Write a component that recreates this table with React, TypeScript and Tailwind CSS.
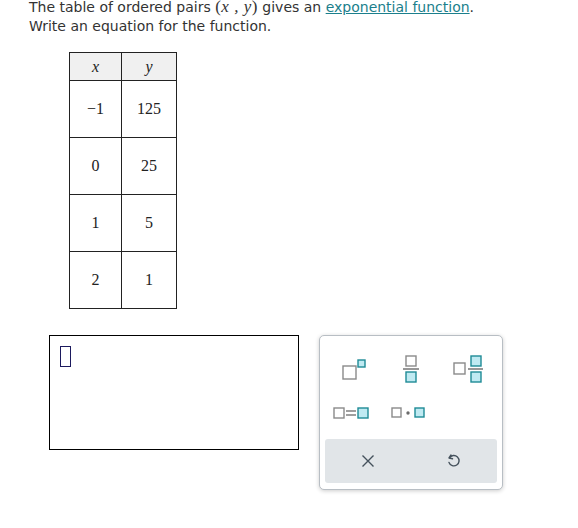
import React from "react"

const sans = { fontFamily: '"DejaVu Sans", Verdana, sans-serif' }
const serif = { fontFamily: '"Liberation Serif", "Times New Roman", serif' }

const rows = [
  ["\u22121", "125"],
  ["0", "25"],
  ["1", "5"],
  ["2", "1"],
]

function Empty({ x, y, s }: { x: number; y: number; s: number }) {
  return <rect x={x} y={y} width={s} height={s} fill="white" stroke="#8a8a8a" strokeWidth="1.4" />
}

function Filled({ x, y, s }: { x: number; y: number; s: number }) {
  return <rect x={x} y={y} width={s} height={s} fill="#bfeaf2" stroke="#1f8b96" strokeWidth="1.4" />
}

function KeyPower() {
  return (
    <svg width="30" height="26" viewBox="0 0 30 26">
      <Empty x={4} y={10} s={13} />
      <Filled x={19} y={4} s={7} />
    </svg>
  )
}

function KeyFraction() {
  return (
    <svg width="20" height="32" viewBox="0 0 20 32">
      <Empty x={5} y={3} s={10} />
      <line x1="2" y1="16" x2="18" y2="16" stroke="#6b6b6b" strokeWidth="1.4" />
      <Filled x={5} y={19} s={10} />
    </svg>
  )
}

function KeyMixed() {
  return (
    <svg width="34" height="32" viewBox="0 0 34 32">
      <Empty x={3} y={10} s={11} />
      <Filled x={20} y={3} s={10} />
      <line x1="17" y1="16" x2="32" y2="16" stroke="#6b6b6b" strokeWidth="1.4" />
      <Filled x={20} y={19} s={10} />
    </svg>
  )
}

function KeyEquals() {
  return (
    <svg width="40" height="16" viewBox="0 0 40 16">
      <Empty x={2} y={3} s={10} />
      <line x1="14" y1="6" x2="24" y2="6" stroke="#6b6b6b" strokeWidth="1.3" />
      <line x1="14" y1="10" x2="24" y2="10" stroke="#6b6b6b" strokeWidth="1.3" />
      <Filled x={26} y={3} s={10} />
    </svg>
  )
}

function KeyDot() {
  return (
    <svg width="36" height="16" viewBox="0 0 36 16">
      <Empty x={2} y={3} s={9} />
      <circle cx="18" cy="8" r="1.7" fill="#6b6b6b" />
      <Filled x={25} y={3} s={9} />
    </svg>
  )
}

export default function App() {
  return (
    <div className="w-[578px] h-[528px] bg-white overflow-hidden relative">
      <div className="pl-[29px] text-[14px] text-[#333]" style={sans}>
        <p className="leading-[15px]">
          The table of ordered pairs{" "}
          <span className="text-[17px] leading-[14px] italic tracking-[0.5px]" style={serif}>
            <span className="not-italic">(</span>x , y<span className="not-italic">)</span>
          </span>{" "}
          gives an{" "}
          <a className="text-[#1b7f8c] underline">exponential function</a>.
        </p>
        <p className="leading-[22px]">Write an equation for the function.</p>
      </div>

      <table
        className="ml-[69px] mt-[15px] border-collapse text-[16px] text-[#222]"
        style={serif}
      >
        <thead>
          <tr className="bg-[#f0f0f0] h-[28px]">
            <th className="w-[52px] border border-[#222] font-normal italic">x</th>
            <th className="w-[55px] border border-[#222] font-normal italic">y</th>
          </tr>
        </thead>
        <tbody>
          {rows.map(([a, b]) => (
            <tr key={a} className="h-[57px]">
              <td className="border border-[#222] text-center">{a}</td>
              <td className="border border-[#222] text-center">{b}</td>
            </tr>
          ))}
        </tbody>
      </table>

      <div className="flex items-start mt-[26px]">
        <div className="ml-[49px] w-[250px] h-[115px] border-[1.5px] border-black p-[10px]">
          <div className="w-[11px] h-[21px] border-[1.5px] border-[#1c1a5e]" />
        </div>

        <div className="ml-[20px] w-[184px] h-[155px] rounded-[5px] border border-[#b8bec4] shadow-[0_1px_4px_rgba(0,0,0,0.2)] bg-white flex flex-col">
          <div className="grid grid-cols-3 h-[58px] items-center justify-items-center pt-[8px] px-[6px]">
            <KeyPower />
            <KeyFraction />
            <KeyMixed />
          </div>
          <div className="flex h-[38px] items-center pl-[12px] gap-[18px]">
            <KeyEquals />
            <KeyDot />
          </div>
          <div className="mx-[5px] mt-[7px] h-[44px] rounded-[3px] bg-[#e1e5e8] grid grid-cols-2 items-center justify-items-center">
            <svg width="14" height="14" viewBox="0 0 14 14">
              <path d="M1.5 1.5 L12.5 12.5 M12.5 1.5 L1.5 12.5" stroke="#44515c" strokeWidth="1.4" />
            </svg>
            <svg width="14" height="16" viewBox="0 0 14 16">
              <path
                d="M4 2 L2 5 L5.5 5.8 M2.4 5 A5.2 5.2 0 1 1 2 9.5"
                fill="none"
                stroke="#44515c"
                strokeWidth="1.4"
                strokeLinecap="round"
                strokeLinejoin="round"
              />
            </svg>
          </div>
        </div>
      </div>
    </div>
  )
}
